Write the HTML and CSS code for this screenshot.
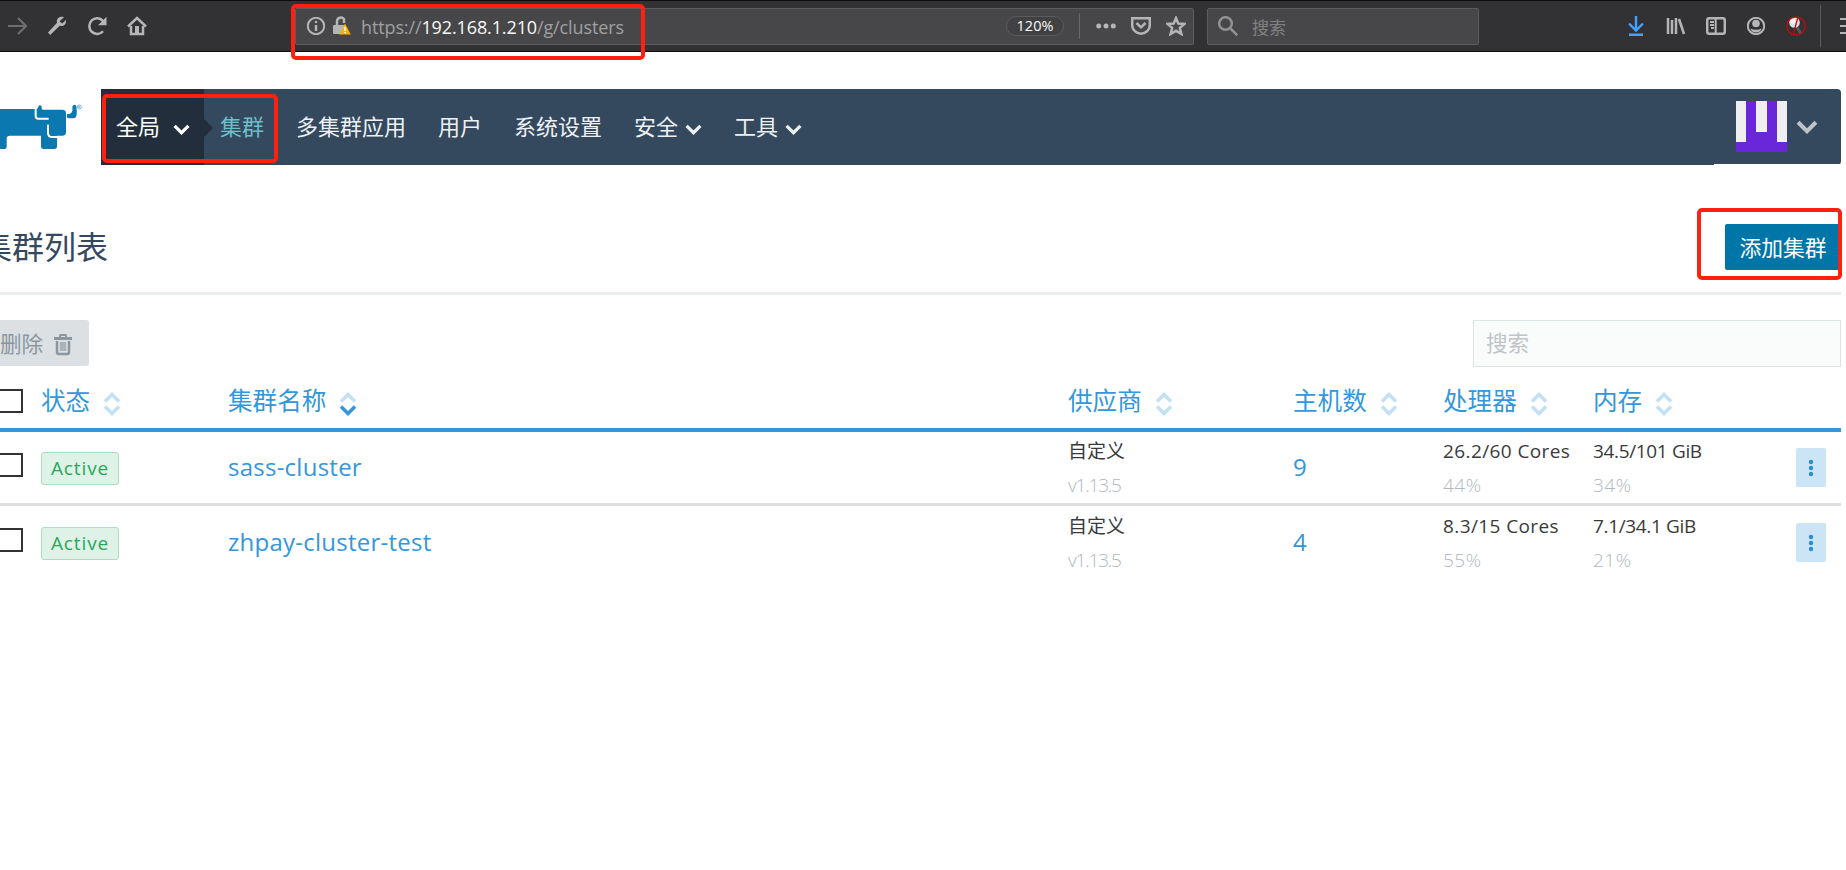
FILE: index.html
```
<!DOCTYPE html>
<html lang="zh-CN">
<head>
    <meta charset="UTF-8">
    <meta name="viewport" content="width=device-width, initial-scale=1.0">
    <title>集群列表</title>
    <link rel="stylesheet" href="styles.css">
</head>
<body>
    <!-- shared icons -->
    <svg class="sprite" aria-hidden="true">
        <symbol id="chevron" viewBox="0 0 16 10"><path d="M1.5 1.5 8 8l6.500-6.500" fill="none" stroke="currentColor" stroke-width="3"/></symbol>
        <symbol id="sort" viewBox="0 0 16 24">
            <path d="M1 9.500 8 2.500l7 7" fill="none" stroke="#c2e1f5" stroke-width="3.500"/>
            <path d="M1 14.500l7 7 7-7" fill="none" stroke-width="3.500"/>
        </symbol>
        <symbol id="dots" viewBox="0 0 6 18"><circle cx="3" cy="3" r="2.200"/><circle cx="3" cy="9" r="2.200"/><circle cx="3" cy="15" r="2.200"/></symbol>
    </svg>

    <div class="toolbar">
        <div class="tools tools-left">
            <span class="tool dim"><svg width="20" height="20" viewBox="0 0 20 20"><path d="M1 10h17M11 2l8 8-8 8"/></svg></span>
            <span class="tool"><svg width="20" height="20" viewBox="0 0 20 20"><path class="fill" d="M17 1.300C13.500-.3 9 2 10 6.700L1 16.500 3.200 19l9.500-9.300C16.500 11 19.700 7.800 18.900 4l-3.700 3.500-2.700-2.300z"/></svg></span>
            <span class="tool"><svg width="20" height="20" viewBox="0 0 20 20"><path class="thick" d="M16 15.200A7.800 7.800 0 1 1 16 5"/><path class="fill" d="M19.500.8v8.500H11z"/></svg></span>
            <span class="tool"><svg width="20" height="20" viewBox="0 0 20 20"><path class="thick" d="M1 10.500 10 2l9 8.500M4 10v8h12v-8"/><path class="fill" d="M8 10h4v8H8z"/></svg></span>
        </div>

        <div class="url-bar">
            <svg class="info" width="18" height="18" viewBox="0 0 18 18"><circle cx="9" cy="9" r="8.200"/><path class="thick" d="M9 8v6"/><circle class="fill" cx="9" cy="5" r="1.300"/></svg>
            <svg class="lock" width="18" height="20" viewBox="0 0 18 20"><path class="thick" d="M4 10V5a4 4 0 0 1 7-2v4"/><rect class="fill" x="0" y="9" width="12" height="9" rx="1"/><path class="warn" d="M12 7.500 17.800 18.500H6.200z"/><path class="warn-mark" d="M12 11v4M12 16v1.300"/></svg>
            <span class="url">https://<b>192.168.1.210</b>/g/clusters</span>
            <span class="zoom-level">120%</span>
            <span class="url-sep"></span>
            <svg class="page-dots" width="20" height="6" viewBox="0 0 20 6"><g class="fill"><circle cx="2.700" cy="3" r="2.500"/><circle cx="10" cy="3" r="2.500"/><circle cx="17.300" cy="3" r="2.500"/></g></svg>
            <svg width="20" height="18" viewBox="0 0 20 18"><path class="thick" d="M1.200 1.200h17.600v7a8.800 8.500 0 0 1-17.600 0z"/><path class="thick" d="M5.500 6 10 10.300 14.500 6"/></svg>
            <svg class="star" width="20" height="20" viewBox="0 0 20 20"><path class="thick" d="m10 2 2.300 5.600 6.200.3-4.700 4 1.600 6.100L10 14.800 4.600 18l1.600-6.100-4.700-4 6.200-.3z"/></svg>
        </div>

        <div class="browser-search">
            <svg width="20" height="20" viewBox="0 0 20 20"><circle class="thick" cx="7.500" cy="7.500" r="6.300"/><path class="thick" d="m12 12 7.300 7.300"/></svg>
            <span>搜索</span>
        </div>

        <div class="tools tools-right">
            <span class="tool download"><svg width="18" height="20" viewBox="0 0 18 20"><path d="M9 0v14M2 7.500l7 7 7-7M2 18.800h14"/></svg></span>
            <span class="tool"><svg width="20" height="18" viewBox="0 0 20 18"><path class="thick" d="M2 1v16M6 3v14M10 1v16M13 2l5 15"/></svg></span>
            <span class="tool"><svg width="20" height="18" viewBox="0 0 20 18"><rect class="thick" x="1.200" y="1.200" width="17.600" height="15.600" rx="2"/><path d="M9.700 1v16M4 5h4M4 8h4M5 11h3"/></svg></span>
            <span class="tool"><svg width="18" height="18" viewBox="0 0 18 18"><circle cx="9" cy="9" r="8.200"/><circle class="fill" cx="9" cy="6.500" r="3.800"/><path class="fill" d="M3.500 11.500q5.500 2.500 11 0-1 4-5.500 4t-5.500-4"/></svg></span>
            <span class="tool blocked"><svg width="20" height="20" viewBox="0 0 20 20"><path class="handle" d="m11 11 4 7"/><circle class="ball" cx="8.500" cy="6.500" r="5.300"/><circle class="shine" cx="7" cy="5" r="2.500"/><circle cx="10" cy="10" r="9.200"/><path d="M12 1 7 19"/></svg></span>
            <span class="tool-sep"></span>
            <svg class="menu" width="20" height="16" viewBox="0 0 20 16"><path d="M1 1h18M1 8h18M1 15h18"/></svg>
        </div>
    </div>

    <header class="header">
        <svg class="logo" width="84" height="50" viewBox="0 0 252 150">
            <g fill="#0b78b0">
                <path d="M0 18h107q7 0 8-7 1-4 5-4 5 0 5 5v5q1 3 5 3h57q11 0 11 11v56q0 11-11 11h-16v32q0 8-8 8h-32q-8 0-8-8V98H29q-9 0-9 9v25q0 6-6 6H0z"/>
                <path d="M222 6q6-2 7 4 4 30-3 34-10 3-25 0V33q20 2 16-22 1-4 5-5z"/>
            </g>
            <path d="M107 16v22q0 9 8 9h31M144 65v24q0 13 13 13h20" fill="none" stroke="#fff" stroke-width="6"/>
            <circle cx="238" cy="12" r="6" fill="none" stroke="#0b78b0" stroke-width="1.500"/>
            <path d="M236 15V9h3v3h-3l4 3" fill="none" stroke="#0b78b0" stroke-width="1"/>
        </svg>
        <nav class="nav">
            <a class="nav-scope">全局<svg class="chev" width="17" height="11"><use href="#chevron"/></svg></a>
            <a class="nav-item active">集群</a>
            <a class="nav-item">多集群应用</a>
            <a class="nav-item">用户</a>
            <a class="nav-item">系统设置</a>
            <a class="nav-item">安全<svg class="chev" width="17" height="11"><use href="#chevron"/></svg></a>
            <a class="nav-item">工具<svg class="chev" width="17" height="11"><use href="#chevron"/></svg></a>
            <div class="user">
                <svg width="51" height="51" viewBox="0 0 5 5" shape-rendering="crispEdges"><path fill="#efefef" d="M0 0h5v5H0z"/><path fill="#6a26d9" d="M1 0h1v3h1V0h1v4h1v1H0V4h1z"/></svg>
                <svg class="user-chev" width="22" height="14"><use href="#chevron"/></svg>
            </div>
        </nav>
    </header>

    <main class="content">
        <div class="title-row">
            <h1>集群列表</h1>
            <button class="btn-add">添加集群</button>
        </div>

        <div class="actions">
            <button class="btn-delete" disabled><span>删除</span>
                <svg width="18" height="22" viewBox="0 0 18 22"><path fill="#8b969e" d="M6 0h6q1 0 1 3h5v3H0V3h5q0-3 1-3m1 2v1h4V2z"/><path d="M3 7v11q0 2 2 2h8q2 0 2-2V7M7 8v9M9 8v9M11 8v9" fill="none" stroke="#8b969e" stroke-width="2.500"/><path d="M6 8v9M8 8v9M10 8v9M12 8v9" stroke="#dce0e3" stroke-width=".8"/></svg>
            </button>
            <input class="search" type="text" placeholder="搜索">
        </div>

        <div class="table">
            <div class="row head">
                <span class="check"></span>
                <span>状态<svg class="sort" width="16" height="24"><use href="#sort"/></svg></span>
                <span>集群名称<svg class="sort sorted" width="16" height="24"><use href="#sort"/></svg></span>
                <span>供应商<svg class="sort" width="16" height="24"><use href="#sort"/></svg></span>
                <span>主机数<svg class="sort" width="16" height="24"><use href="#sort"/></svg></span>
                <span>处理器<svg class="sort" width="16" height="24"><use href="#sort"/></svg></span>
                <span>内存<svg class="sort" width="16" height="24"><use href="#sort"/></svg></span>
            </div>
            <div class="row">
                <span class="check"></span>
                <span class="badge">Active</span>
                <a class="link">sass-cluster</a>
                <div class="cell version"><p>自定义</p><small>v1.13.5</small></div>
                <a class="link">9</a>
                <div class="cell cpu"><p>26.2/60 Cores</p><small>44%</small></div>
                <div class="cell memory"><p>34.5/101 GiB</p><small>34%</small></div>
                <button class="more"><svg width="6" height="18"><use href="#dots"/></svg></button>
            </div>
            <div class="row last">
                <span class="check"></span>
                <span class="badge">Active</span>
                <a class="link">zhpay-cluster-test</a>
                <div class="cell version"><p>自定义</p><small>v1.13.5</small></div>
                <a class="link">4</a>
                <div class="cell cpu"><p>8.3/15 Cores</p><small>55%</small></div>
                <div class="cell memory"><p>7.1/34.1 GiB</p><small>21%</small></div>
                <button class="more"><svg width="6" height="18"><use href="#dots"/></svg></button>
            </div>
        </div>
    </main>

    <!-- highlight boxes -->
    <div class="mark mark-url"></div>
    <div class="mark mark-nav"></div>
    <div class="mark mark-add"></div>
</body>
</html>
```
FILE: styles.css
```
:root {
    --navy: #34495e;
    --blue: #3497da;
    --red: #ff2010;
    --icon: #b5b5b6;
}

* {
    margin: 0;
    padding: 0;
    box-sizing: border-box;
}

body {
    position: relative;
    height: 870px;
    overflow: hidden;
    background: #fff;
    color: #3a3a3a;
    font-family: "Open Sans", "Noto Sans CJK SC", sans-serif;
}

svg {
    flex: none;
}

button,
input {
    font: inherit;
    border: 0;
}

.sprite {
    position: absolute;
    width: 0;
    height: 0;
}

/* browser toolbar */
.toolbar {
    display: flex;
    align-items: center;
    height: 52px;
    background: #323234;
    border-top: 1px solid #0c0c0d;
    border-bottom: 1px solid #0c0c0d;
    overflow: hidden;
}

.toolbar svg {
    fill: none;
    stroke: var(--icon);
    stroke-width: 2;
}

.toolbar .thick {
    stroke-width: 2.5;
}

.toolbar .fill {
    fill: var(--icon);
    stroke: none;
}

.tools {
    display: flex;
    align-items: center;
    flex: none;
}

.tools-left {
    margin-left: -3px;
}

.tools-right {
    margin-left: 137px;
}

.tool {
    display: flex;
    justify-content: center;
    width: 40px;
}

.toolbar .dim svg {
    stroke: #6f6f70;
}

.toolbar .download svg {
    stroke: #45a1ff;
    stroke-width: 2.4;
}

.toolbar .blocked svg {
    stroke: #c50b0b;
    stroke-width: 1.3;
}

.blocked .handle {
    stroke: #555;
    stroke-width: 3;
}

.blocked .ball {
    fill: #d3e3e8;
    stroke: none;
}

.blocked .shine {
    fill: #fff;
    stroke: none;
}

.tool-sep {
    width: 1px;
    height: 42px;
    margin-left: 4px;
    background: #5b5b5d;
}

.menu {
    margin-left: 18px;
}

.url-bar,
.browser-search {
    display: flex;
    align-items: center;
    flex: none;
    height: 37px;
    background: #474749;
    border: 1px solid #5c5c5e;
    border-radius: 2px;
}

.url-bar {
    width: 899px;
    margin-left: 138px;
    padding: 0 7px 0 11px;
}

.lock {
    margin-left: 8px;
}

.lock .warn {
    fill: #ffb000;
    stroke: none;
}

.lock .warn-mark {
    stroke: #fff;
    stroke-width: 1.5;
}

.url {
    margin-left: 10px;
    padding-top: 1px;
    color: #a0a0a1;
    font-size: 18px;
    letter-spacing: -0.12px;
}

.url b {
    color: #f9f9fa;
    font-weight: 400;
}

.zoom-level {
    width: 58px;
    height: 20px;
    margin-left: auto;
    border: 1px solid #5b5b5d;
    border-radius: 10px;
    background: #414143;
    color: #f9f9fa;
    font-size: 14.5px;
    line-height: 18px;
    text-align: center;
}

.url-sep {
    width: 1px;
    height: 26px;
    margin: 0 16px 0 15px;
    background: #69696b;
}

.page-dots {
    margin-right: 15px;
}

.star {
    margin-left: 15px;
}

.browser-search {
    width: 272px;
    margin-left: 13px;
    padding-left: 10px;
    color: #818182;
    font-size: 17px;
}

.browser-search svg {
    margin-right: 14px;
    stroke: #929293;
}

/* page header */
.header {
    display: flex;
    padding: 37px 5px 0 0;
}

.logo {
    margin: 14px 17px 0 0;
}

/* the user menu on the right is 1px shorter than the rest of the bar */
.nav {
    display: flex;
    flex: 1;
    height: 76px;
    background:
        linear-gradient(var(--navy), var(--navy)) 0 0 / 100% 75px no-repeat,
        linear-gradient(var(--navy), var(--navy)) 0 0 / 1613px 76px no-repeat;
    border-radius: 0 4px 4px 0;
    color: #fff;
    font-size: 22px;
    line-height: 74px;
}

.nav-scope {
    position: relative;
    width: 103px;
    padding-left: 15px;
    background: #222e3b;
    white-space: nowrap;
}

/* pointer towards the active tab */
.nav-scope::after {
    content: "";
    position: absolute;
    left: 100%;
    top: 30px;
    border: 9px solid transparent;
    border-right: 0;
    border-left-color: #222e3b;
}

.nav-scope .chev {
    margin-left: 13px;
}

.nav-item {
    padding: 0 16px;
    color: #eef1f4;
    white-space: nowrap;
}

.nav-item.active {
    color: #6ebfca;
}

.nav-item .chev {
    margin-left: 7px;
}

.user {
    display: flex;
    align-items: center;
    gap: 9px;
    height: 75px;
    margin-left: auto;
    padding-right: 23px;
}

.user-chev {
    color: #bdc3c7;
}

/* title and actions */
.content {
    width: 1841px;
}

.title-row {
    display: flex;
    align-items: flex-start;
    justify-content: space-between;
    height: 130px;
    padding-top: 59px;
    border-bottom: 3px solid #eaeeef;
}

h1 {
    margin-left: -20px;
    color: var(--navy);
    font-size: 32px;
    font-weight: 400;
    line-height: 45px;
}

.btn-add {
    width: 116px;
    height: 46px;
    background: #0075a8;
    border-radius: 2px;
    color: #fff;
    font-size: 21.8px;
    line-height: 47px;
}

.actions {
    display: flex;
    justify-content: space-between;
    padding-top: 25px;
}

.btn-delete {
    display: flex;
    align-items: center;
    gap: 11px;
    width: 89px;
    height: 46px;
    background: #dce0e3;
    border-radius: 0 3px 3px 0;
    color: #8b969e;
    font-size: 21.6px;
}

.btn-delete span {
    padding-bottom: 2px;
}

.btn-delete svg {
    margin-top: 3px;
}

.search {
    width: 368px;
    height: 47px;
    padding: 0 12px 2px;
    border: 1px solid #dce3e4;
    background: #fafcfb;
    font-size: 21.6px;
}

.search::placeholder {
    color: #bfc4c8;
}

/* cluster table */
.row {
    display: grid;
    grid-template-columns: 41px 187px 840px 225px 150px 150px 203px 30px;
    align-items: start;
    height: 74px;
    border-bottom: 3px solid #dedede;
}

.row.head {
    align-items: center;
    height: 65px;
    padding-top: 7px;
    border-bottom: 4px solid var(--blue);
    color: var(--blue);
    font-size: 24.6px;
    line-height: 36px;
}

.row.last {
    padding-top: 1px;
    border-bottom: 0;
}

.check {
    width: 23px;
    height: 24px;
    margin-top: 21px;
    border: 2px solid #333;
    border-left: 0;
}

.head .check {
    margin-top: -1px;
}

.sort {
    margin-left: 14px;
    vertical-align: -6px;
    stroke: #c2e1f5;
}

.sorted {
    stroke: var(--blue);
}

.badge {
    width: 78px;
    height: 33px;
    margin-top: 20px;
    border: 1px solid #a9dfbf;
    border-radius: 3px;
    background: #def2e7;
    color: #29a85d;
    font-size: 19px;
    letter-spacing: 0.9px;
    line-height: 31px;
    text-align: center;
}

.link {
    margin-top: 17px;
    color: var(--blue);
    font-size: 24px;
    letter-spacing: 0.25px;
    line-height: 36px;
}

.cell {
    padding-top: 6px;
    font-size: 19px;
    line-height: 26px;
    white-space: nowrap;
}

.cell small {
    display: block;
    margin-top: 8px;
    color: #b0b8be;
    font-size: 19px;
    font-weight: 300;
    letter-spacing: 0.5px;
    line-height: 26px;
}

.version small {
    letter-spacing: -1.2px;
}

.cpu p {
    letter-spacing: 0.4px;
}

.memory p {
    letter-spacing: -0.35px;
}

.more {
    display: flex;
    align-items: center;
    justify-content: center;
    width: 30px;
    height: 39px;
    margin-top: 16px;
    background: #cbe4f6;
    border-radius: 2px;
    fill: #2a8fd0;
}

/* highlight boxes */
.mark {
    position: absolute;
    border: 4px solid var(--red);
    border-radius: 5px;
}

.mark-url {
    left: 291px;
    top: 4px;
    width: 354px;
    height: 56px;
}

.mark-nav {
    left: 102px;
    top: 94px;
    width: 176px;
    height: 69px;
}

.mark-add {
    left: 1697px;
    top: 208px;
    width: 145px;
    height: 72px;
}
```
